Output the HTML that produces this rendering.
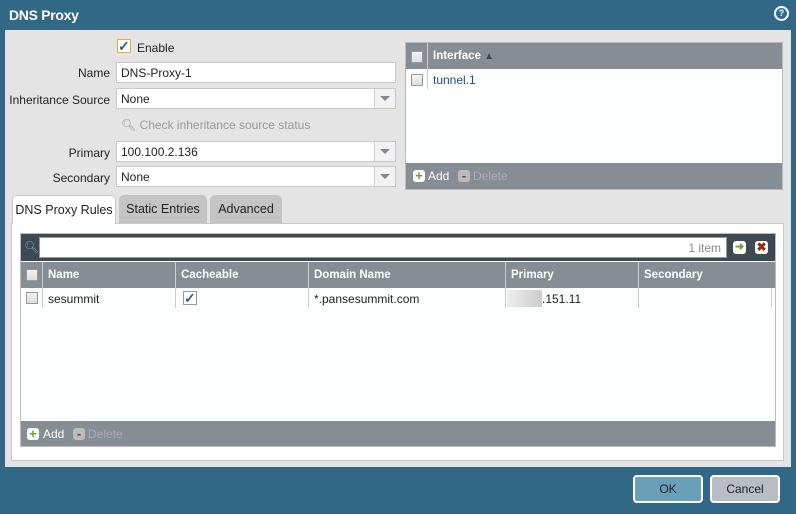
<!DOCTYPE html><html><head><style>
*{box-sizing:border-box;margin:0;padding:0}
body{width:796px;height:514px;background:#316885;font-family:"Liberation Sans",sans-serif;font-size:12px;color:#222;position:relative;overflow:hidden}
.a{position:absolute;white-space:nowrap}
.lbl{position:absolute;text-align:right;width:110px;left:0}
.inp{position:absolute;background:#fff;border:1px solid #c8c8c8;height:21px;padding:3px 4px;font-size:12px}
.dd{position:absolute;right:0;top:0;width:21px;height:19px;border-left:1px solid #d0d0d0;background:#f2f2f2}
.dd:after{content:"";position:absolute;left:5px;top:7px;border-left:5px solid transparent;border-right:5px solid transparent;border-top:5px solid #7b8a95}
.cb{position:absolute;width:12px;height:12px;border:1px solid #999;background:linear-gradient(#f4f4f4,#ddd)}
.hd{color:#fff;font-weight:bold;font-size:11.5px}
.vl{position:absolute;width:1px;background:#ccc}
.tab{position:absolute;top:195px;height:28px;background:#c4c4c4;border-radius:5px 5px 0 0;padding:7px 0 0 0;font-size:12.5px;text-align:center;white-space:nowrap}
</style></head><body>
<div class="a" style="left:9px;top:7px;color:#fff;font-size:14px;font-weight:bold;letter-spacing:-0.3px">DNS Proxy</div>
<div class="a" style="left:774px;top:6px;width:15px;height:15px;border-radius:50%;background:#fff;"><div style="position:absolute;left:2px;top:2px;width:11px;height:11px;border-radius:50%;background:#2e6d96;color:#fff;font-size:9px;font-weight:bold;text-align:center;line-height:11px">?</div></div>
<div class="a" style="left:5px;top:30px;width:786px;height:437px;background:#e4e4e4"></div>
<div class="a" style="left:117px;top:39px;width:14px;height:14px;border:1px solid #e8b030;background:#fff;color:#2c5f87;font-size:14px;line-height:12px;font-weight:bold">✓</div>
<div class="a" style="left:137px;top:41px">Enable</div>
<div class="lbl" style="top:66px">Name</div>
<div class="inp" style="left:116px;top:62px;width:280px">DNS-Proxy-1</div>
<div class="lbl" style="top:93px">Inheritance Source</div>
<div class="inp" style="left:116px;top:88px;width:280px">None<div class="dd"></div></div>
<div class="a" style="left:121px;top:118px;color:#999">🔍︎ Check inheritance source status</div>
<div class="lbl" style="top:146px">Primary</div>
<div class="inp" style="left:116px;top:141px;width:280px">100.100.2.136<div class="dd"></div></div>
<div class="lbl" style="top:171px">Secondary</div>
<div class="inp" style="left:116px;top:166px;width:280px">None<div class="dd"></div></div>
<div class="a" style="left:405px;top:42px;width:378px;height:148px;background:#fcfdfd;border:1px solid #bbb"></div>
<div class="a" style="left:406px;top:43px;width:376px;height:26px;background:#878d94"></div>
<div class="cb" style="left:411px;top:51px"></div>
<div class="a" style="left:427px;top:43px;width:1px;height:46px;background:#ccc"></div>
<div class="a hd" style="left:433px;top:50px">Interface <span style="font-size:10px;color:#3d4a52">▲</span></div>
<div class="cb" style="left:411px;top:74px"></div>
<div class="a" style="left:433px;top:73px;color:#1f4e79">tunnel.1</div>
<div class="a" style="left:406px;top:163px;width:376px;height:26px;background:#878d94"></div>
<div class="a" style="left:413px;top:170px;width:12px;height:12px;border-radius:3px;background:#fff;color:#7a9a20;font-weight:bold;font-size:13px;line-height:12px;text-align:center">+</div>
<div class="a" style="left:428px;top:169px;color:#fff">Add</div>
<div class="a" style="left:458px;top:170px;width:12px;height:12px;border-radius:3px;background:#bbb;color:#8a3a2a;font-weight:bold;font-size:13px;line-height:11px;text-align:center">-</div>
<div class="a" style="left:473px;top:169px;color:#aab">Delete</div>
<div class="a" style="left:11px;top:223px;width:773px;height:238px;background:#fff;border:1px solid #c8c8c8"></div>
<div class="tab" style="left:12px;width:104px;height:29px;background:#fff;border:1px solid #c8c8c8;border-bottom:none">DNS Proxy Rules</div>
<div class="tab" style="left:119px;width:88px">Static Entries</div>
<div class="tab" style="left:210px;width:72px">Advanced</div>
<div class="a" style="left:20px;top:233px;width:756px;height:214px;background:#fcfdfd;border:1px solid #bbb"></div>
<div class="a" style="left:21px;top:234px;width:754px;height:27px;background:#3d4a52"></div>
<div class="a" style="left:24px;top:240px;color:#7ab">🔍︎</div>
<div class="a" style="left:39px;top:237px;width:688px;height:21px;background:#fff;border:1px solid #999;text-align:right;padding:3px 5px;color:#888">1 item</div>
<div class="a" style="left:733px;top:241px;width:13px;height:13px;border-radius:3px;background:#fff;color:#7a9a20;font-size:11px;font-weight:bold;line-height:13px;text-align:center">➜</div>
<div class="a" style="left:755px;top:241px;width:13px;height:13px;border-radius:3px;background:#fff;color:#9a2a10;font-size:12px;font-weight:bold;line-height:13px;text-align:center">✖</div>
<div class="a" style="left:21px;top:262px;width:754px;height:26px;background:#878d94"></div>
<div class="cb" style="left:26px;top:269px"></div>
<div class="a hd" style="left:48px;top:269px">Name</div>
<div class="a hd" style="left:181px;top:269px">Cacheable</div>
<div class="a hd" style="left:314px;top:269px">Domain Name</div>
<div class="a hd" style="left:511px;top:269px">Primary</div>
<div class="a hd" style="left:644px;top:269px">Secondary</div>
<div class="vl" style="left:42px;top:262px;height:46px"></div>
<div class="vl" style="left:175px;top:262px;height:46px"></div>
<div class="vl" style="left:308px;top:262px;height:46px"></div>
<div class="vl" style="left:505px;top:262px;height:46px"></div>
<div class="vl" style="left:638px;top:262px;height:46px"></div>
<div class="vl" style="left:771px;top:288px;height:20px"></div>
<div class="cb" style="left:26px;top:292px"></div>
<div class="a" style="left:48px;top:292px">sesummit</div>
<div class="a" style="left:183px;top:291px;width:14px;height:14px;border:1px solid #999;background:#fff;color:#2c5f87;font-size:14px;line-height:12px;font-weight:bold">✓</div>
<div class="a" style="left:314px;top:292px">*.pansesummit.com</div>
<div class="a" style="left:507px;top:290px;width:35px;height:17px;background:linear-gradient(90deg,#eee,#ccc)"></div>
<div class="a" style="left:542px;top:292px">.151.11</div>
<div class="a" style="left:21px;top:421px;width:754px;height:25px;background:#878d94"></div>
<div class="a" style="left:27px;top:428px;width:12px;height:12px;border-radius:3px;background:#fff;color:#7a9a20;font-weight:bold;font-size:13px;line-height:12px;text-align:center">+</div>
<div class="a" style="left:43px;top:427px;color:#fff">Add</div>
<div class="a" style="left:73px;top:428px;width:12px;height:12px;border-radius:3px;background:#bbb;color:#8a3a2a;font-weight:bold;font-size:13px;line-height:11px;text-align:center">-</div>
<div class="a" style="left:88px;top:427px;color:#aab">Delete</div>
<div class="a" style="left:633px;top:475px;width:70px;height:28px;background:#6a9fb8;border:2px solid #fff;border-radius:4px;text-align:center;line-height:24px">OK</div>
<div class="a" style="left:710px;top:475px;width:70px;height:28px;background:#b8bcc4;border:2px solid #fff;border-radius:4px;text-align:center;line-height:24px">Cancel</div>
</body></html>
